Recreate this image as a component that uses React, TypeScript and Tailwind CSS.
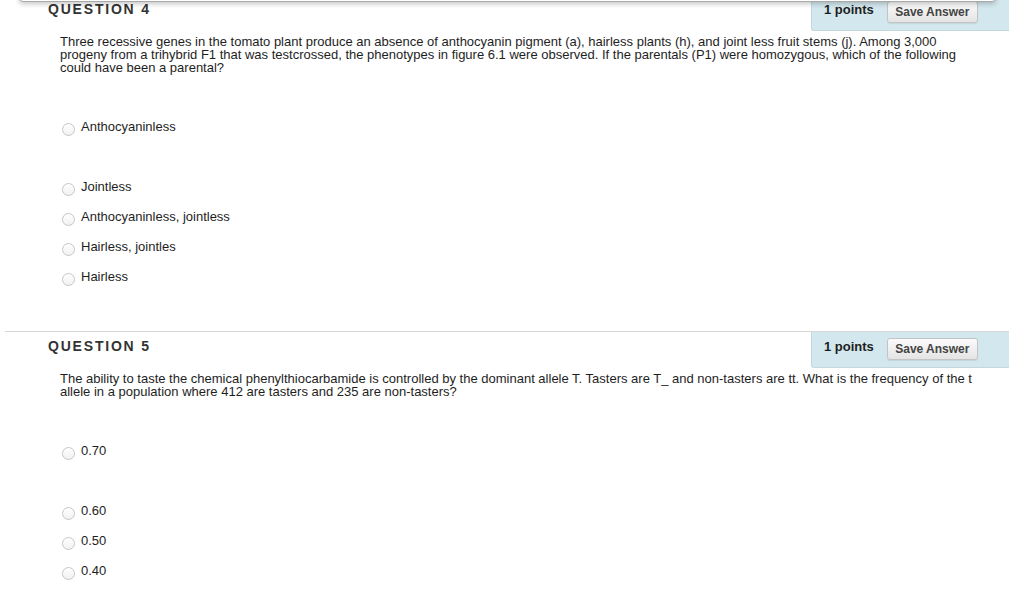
import { Fragment } from "react";

interface Question {
  num: number;
  lines: string[];
  options: string[];
}

const questions: Question[] = [
  {
    num: 4,
    lines: [
      "Three recessive genes in the tomato plant produce an absence of anthocyanin pigment (a), hairless plants (h), and joint less fruit stems (j). Among 3,000",
      "progeny from a trihybrid F1 that was testcrossed, the phenotypes in figure 6.1 were observed. If the parentals (P1) were homozygous, which of the following",
      "could have been a parental?",
    ],
    options: ["Anthocyaninless", "Jointless", "Anthocyaninless, jointless", "Hairless, jointles", "Hairless"],
  },
  {
    num: 5,
    lines: [
      "The ability to taste the chemical phenylthiocarbamide is controlled by the dominant allele T. Tasters are T_ and non-tasters are tt. What is the frequency of the t",
      "allele in a population where 412 are tasters and 235 are non-tasters?",
    ],
    options: ["0.70", "0.60", "0.50", "0.40"],
  },
];

function QuestionBlock({ q }: { q: Question }) {
  return (
    <div className="border-t border-[#d6d6d6] pb-[39px]">
      {/* Header */}
      <div className="flex h-[36px]">
        <div className="flex-1 pl-[43px] pt-[6px] text-[14px] leading-[16px] font-bold tracking-[1.8px] text-[#333]">
          QUESTION {q.num}
        </div>
        <div className="w-[198px] flex items-start pl-[12px] bg-[#d3e8ee] border-l border-b border-[#c3d8de] rounded-bl-[3px]">
          <span className="mt-[8px] text-[13px] leading-[14px] font-bold text-[#1e1e1e]">1 points</span>
          <button className="ml-[13px] mt-[6px] h-[22px] w-[91px] rounded-[3px] border border-[#c4c4c4] bg-gradient-to-b from-[#fbfbfb] to-[#e4e4e4] text-[12px] leading-[14px] font-bold text-[#444] shadow-[0_1px_1px_rgba(0,0,0,0.08)]">
            Save Answer
          </button>
        </div>
      </div>

      {/* Question text */}
      <p className="mt-[4px] pl-[55px] text-[13px] leading-[13px] text-[#1e1e1e] whitespace-nowrap">
        {q.lines.map((l, i) => (
          <Fragment key={i}>
            {l}
            {i < q.lines.length - 1 && <br />}
          </Fragment>
        ))}
      </p>

      {/* Options */}
      <div className="mt-[38px] pl-[57px]">
        {q.options.map((o, i) => (
          <label key={o} className={`flex items-center h-[30px] ${i === 0 ? "mb-[30px]" : ""}`}>
            <span className="mt-[5px] w-[13px] h-[13px] rounded-full border border-[#c6c6c6] bg-gradient-to-b from-white to-[#f1f1f1] shrink-0" />
            <span className="ml-[6px] text-[13px] text-[#1e1e1e]">{o}</span>
          </label>
        ))}
      </div>
    </div>
  );
}

export default function App() {
  return (
    <div className="relative h-[607px] overflow-hidden bg-white font-['Liberation_Sans',Arial,sans-serif]">
      {/* floating bar above, only its bottom edge visible */}
      <div className="absolute z-10 left-[19px] top-[-20px] w-[977px] h-[22px] bg-white border border-[#a9a9a9] rounded-b-[4px] shadow-[0_2px_5px_rgba(0,0,0,0.22)]" />

      <div className="ml-[5px] mr-[15px] -mt-[6px]">
        {questions.map(q => (
          <QuestionBlock key={q.num} q={q} />
        ))}
      </div>
    </div>
  );
}
